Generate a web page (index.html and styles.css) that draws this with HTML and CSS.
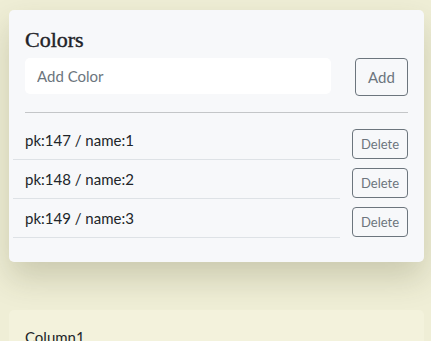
FILE: index.html
```html
<!DOCTYPE html>
<html>
<head>
<meta charset="utf-8">
<link rel="stylesheet" href="styles.css">
</head>
<body>
<div class="page">
  <section class="card">
    <h2 class="title">Colors</h2>
    <div class="add-row">
      <input class="color-input" type="text" placeholder="Add Color">
      <button class="btn btn-add">Add</button>
    </div>
    <hr class="divider">
    <div class="list-wrap">
      <ul class="list">
        <li class="item">pk:147 / name:1</li>
        <li class="item">pk:148 / name:2</li>
        <li class="item">pk:149 / name:3</li>
      </ul>
      <div class="actions">
        <button class="btn btn-del">Delete</button>
        <button class="btn btn-del">Delete</button>
        <button class="btn btn-del">Delete</button>
      </div>
    </div>
  </section>
  <section class="card2">
    <div class="col-label">Column1</div>
  </section>
</div>
</body>
</html>
```
FILE: styles.css
```css
html, body {
  margin: 0;
  padding: 0;
  background: #efeed6;
  font-family: Lato, "Noto Sans", sans-serif;
  color: #212529;
  overflow: hidden;
}
.page {
  padding: 10px 7px 0 9px;
  display: flex;
  flex-direction: column;
  gap: 48px;
}
.card {
  background: #f7f8fa;
  border-radius: 5px;
  padding: 16px 16px 24px 16px;
  box-shadow: 0 16px 32px rgba(60, 60, 20, 0.2);
}
.title {
  margin: 0 0 4px 0;
  font-family: "Liberation Serif", serif;
  font-weight: normal;
  font-size: 22px;
  line-height: 28px;
  color: #1f2328;
  -webkit-text-stroke: 0.4px #1f2328;
}
.add-row {
  display: flex;
  align-items: flex-start;
  gap: 24px;
}
.color-input {
  flex: 1;
  height: 36px;
  box-sizing: border-box;
  border: none;
  border-radius: 5px;
  background: #fff;
  padding: 0 12px;
  font-family: inherit;
  font-size: 15px;
  color: #212529;
  outline: none;
}
.color-input::placeholder {
  color: #6c757d;
}
.btn {
  background: transparent;
  border: 1px solid #6c757d;
  color: #6c757d;
  border-radius: 4px;
  font-family: inherit;
  padding: 0;
  cursor: pointer;
}
.btn-add {
  width: 53px;
  height: 38px;
  font-size: 15px;
}
.divider {
  margin: 16px 0 8px 0;
  border: 0;
  border-top: 1px solid #c4c6c8;
}
.list-wrap {
  display: flex;
  gap: 12px;
}
.list {
  flex: 1;
  list-style: none;
  margin: 0 0 0 -12px;
  padding: 0;
}
.item {
  height: 39px;
  box-sizing: border-box;
  padding: 0 12px;
  display: flex;
  align-items: center;
  font-size: 15px;
  border-bottom: 1px solid #dee2e6;
}
.actions {
  display: flex;
  flex-direction: column;
  gap: 9px;
  padding-top: 8px;
}
.btn-del {
  width: 56px;
  height: 30px;
  font-size: 13px;
}
.card2 {
  background: #f3f2dc;
  border-radius: 5px;
  padding: 18px 16px 16px 16px;
  height: 80px;
}
.col-label {
  font-size: 15px;
  color: #212529;
}
```
